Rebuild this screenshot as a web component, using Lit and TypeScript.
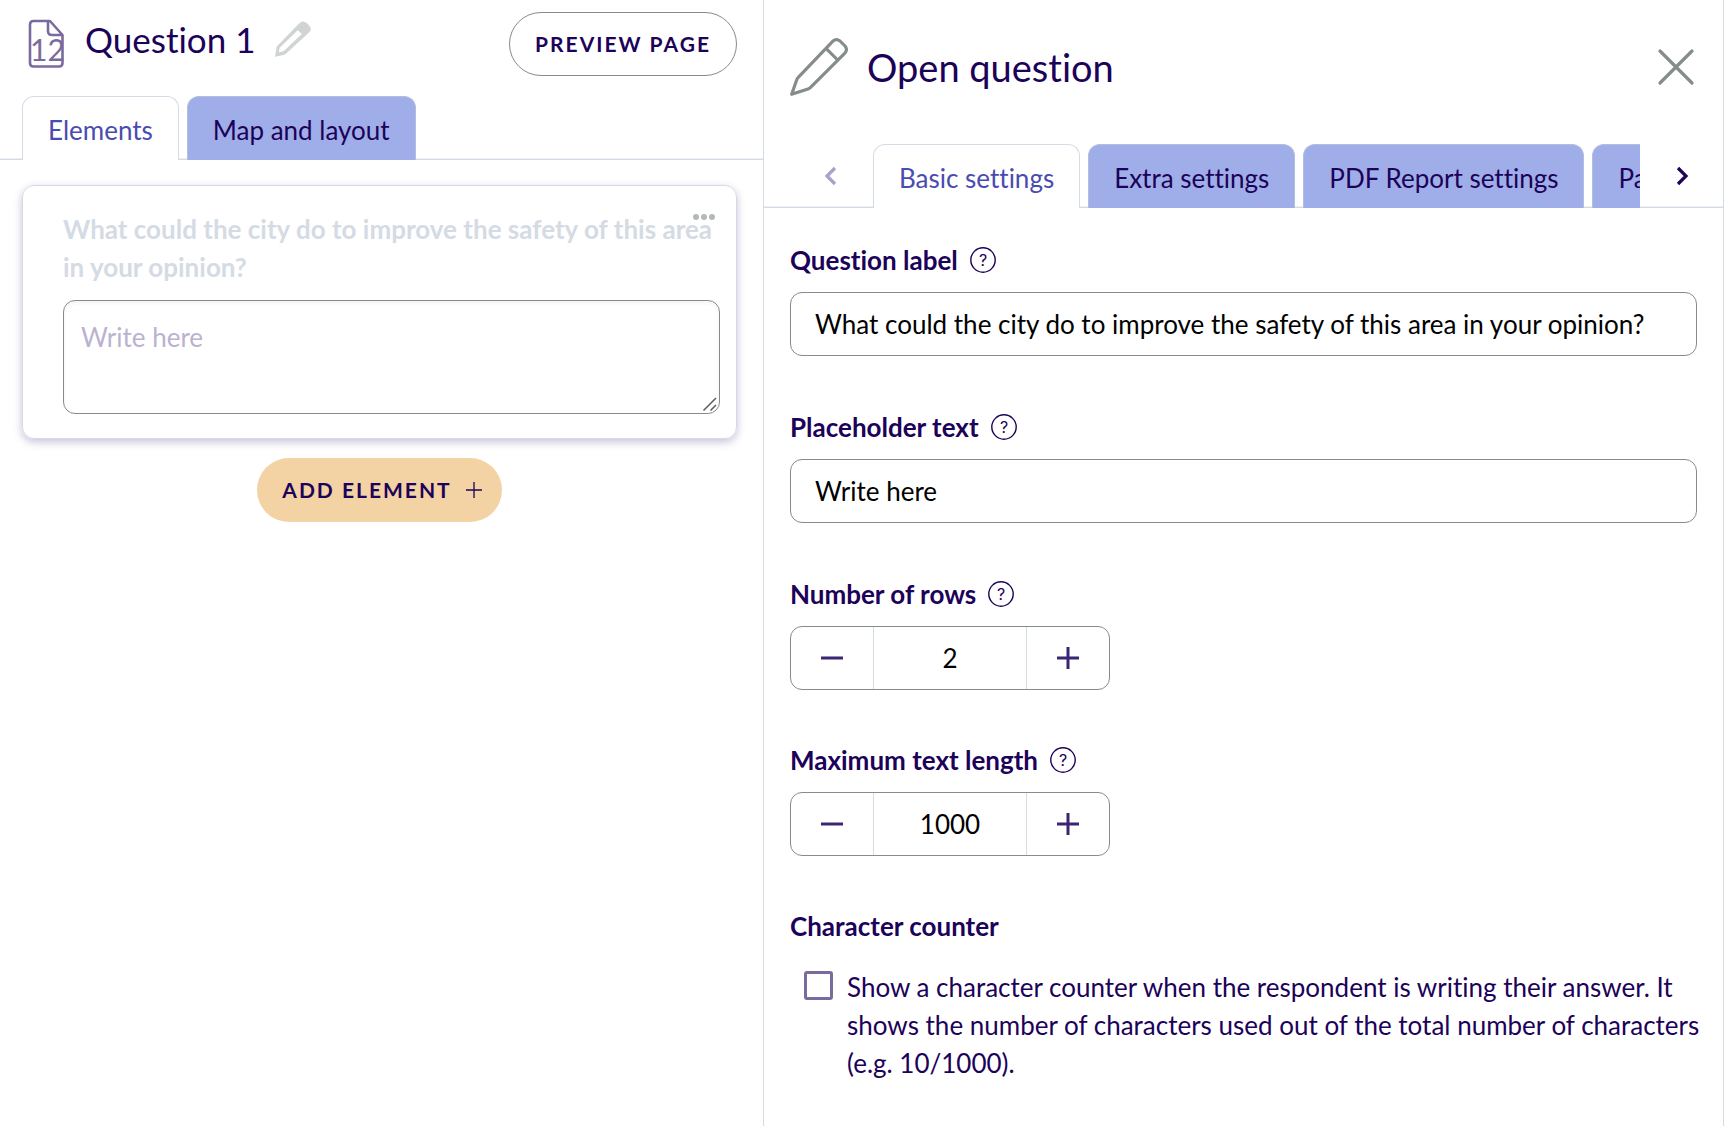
import { LitElement, html, css, svg } from "lit";
import { customElement, state } from "lit/decorators.js";
import { classMap } from "lit/directives/class-map.js";

const pageIcon = html`<svg class="page-icon" width="38" height="50" viewBox="0 0 38 50" aria-hidden="true">
  <path d="M22 2H5.500Q2 2 2 5.500V44Q2 47.500 5.500 47.500H31Q34.500 47.500 34.500 44V16ZM20 2V12Q20 16 24 16H34.500" fill="none" stroke="currentColor" stroke-width="2.600" stroke-linejoin="round" />
  <text x="2" y="42" font-size="30" fill="currentColor">12</text>
</svg>`;

const smallPencil = html`<svg width="36" height="36" viewBox="0 0 106 106" aria-hidden="true">
  <path fill="currentColor" fill-rule="evenodd" d="M0 105L5 75L71 7Q82 -4 93 6L99 12Q111 23 101 33L33 96Q30 99 26 100ZM11 93L26 88L79 38L67 27L14 79Z" />
</svg>`;

const bigPencil = html`<svg class="big-pencil" width="58" height="58" viewBox="0 0 174 174" fill="none" stroke="currentColor" stroke-width="9.500" stroke-linejoin="round" aria-hidden="true">
  <path d="M5 169L20 126Q21 122 24 119L128 10Q139 1 150 9L165 24Q174 35 164 46L61 149Q58 152 54 153ZM108 31L143 66" />
</svg>`;

const closeIcon = html`<svg width="38" height="38" viewBox="0 0 38 38" aria-hidden="true">
  <path d="M3 3L35 35M35 3L3 35" fill="none" stroke="currentColor" stroke-width="3.200" stroke-linecap="round" />
</svg>`;

const chevron = (d: string) => html`<svg width="14" height="20" viewBox="0 0 14 20" aria-hidden="true">
  <path d=${d} fill="none" stroke="currentColor" stroke-width="3.200" />
</svg>`;

const sign = (plus: boolean) => html`<svg width="24" height="24" viewBox="0 0 24 24" aria-hidden="true" stroke="currentColor" stroke-width="3">
  <path d="M1 12H23" />${plus ? svg`<path d="M12 1V23" />` : ""}
</svg>`;

@customElement("help-button")
class HelpButton extends LitElement {
  static styles = css`
    :host { display: flex; }
    .help { display: flex; padding: 0; border: 0; background: none; color: #1c0259; cursor: pointer; }
    .mark { font-family: Inter, sans-serif; }
  `;
  render() {
    return html`<button class="help" type="button" aria-label="Help">
      <svg width="26" height="26" viewBox="0 0 26 26" aria-hidden="true">
        <circle cx="13" cy="13" r="12.200" fill="none" stroke="currentColor" stroke-width="1.400" />
        <text class="mark" x="13" y="18.500" font-size="16" text-anchor="middle" fill="currentColor">?</text>
      </svg>
    </button>`;
  }
}

@customElement("app-root")
class AppRoot extends LitElement {
  @state() private leftTab = 0;
  @state() private rightTab = 0;
  @state() private question = "What could the city do to improve the safety of this area in your opinion?";
  @state() private placeholder = "Write here";
  @state() private rows = 2;
  @state() private maxLength = 1000;

  static styles = css`
    :host {
      display: grid;
      grid-template-columns: minmax(0, 764fr) minmax(0, 960fr);
      min-height: 100vh;
      background: #fff;
      color: #1c0259;
      font: 400 26px/38px Lato, sans-serif;
      font-variant-ligatures: none;
      box-sizing: border-box;
    }
    *, *::before { box-sizing: border-box; }
    button, input, textarea { font: inherit; font-variant-ligatures: none; color: inherit; margin: 0; }
    button { cursor: pointer; padding: 0; border: 0; background: none; }
    h1, h2 { margin: 0; font-weight: 400; }

    .left, .right { border-right: 1px solid #d5dbe4; }
    .left-head { display: flex; align-items: center; padding: 12px 26px 20px 28px; }
    .page-icon { color: #7a6b9f; flex: none; }
    .title { display: flex; align-items: center; gap: 20px; flex: 1; padding: 0 0 10px 19px; }
    .title h1 { font-size: 35px; line-height: 44px; }
    .edit { display: flex; color: #d0d5d3; }
    .pill {
      display: flex; align-items: center; justify-content: center; gap: 16px;
      height: 64px; padding: 0 25px; border-radius: 32px;
      font-size: 21px; font-weight: 700; letter-spacing: 2px; text-transform: uppercase;
    }
    .preview { border: 1px solid #848d8b; }
    .actions { display: flex; justify-content: center; padding: 19px 26px 0 22px; }
    .add { background: #f3d2a3; gap: 14px; padding: 0 20px 0 25px; }

    .tabs {
      display: flex; gap: 8px; height: 64px;
      box-shadow: inset 0 -1px #d5dbe4, inset 0 -2px #eceff3;
    }
    .left .tabs { padding-left: 22px; }
    .tab {
      flex: none; height: 64px; padding: 2px 25px 0;
      border: 1px solid #b3bedd; border-bottom: 0; border-radius: 12px 12px 0 0;
      background: #9faee8; white-space: nowrap;
    }
    .tab.active { background: #fff; color: #4a4bb0; border-color: #d5dbe4; }
    .strip { display: flex; gap: 8px; flex: 1; min-width: 0; overflow: hidden; }
    .right .tabs { gap: 0; }
    .arrow { flex: none; display: flex; align-items: center; justify-content: center; width: 83px; }
    .prev { width: 109px; padding-left: 24px; color: #aaa1c6; }

    .card {
      position: relative; margin: 25px 26px 0 22px; padding: 24px 16px 24px 40px;
      border: 1px solid #d5dbe4; border-radius: 12px;
      box-shadow: 0 3px 8px rgba(60, 30, 120, 0.28);
    }
    .card-label { display: block; color: #d5dbe4; font-weight: 700; padding-bottom: 14px; }
    .menu { position: absolute; top: 21px; right: 18px; display: flex; padding: 6px 2px; color: #b3b9b7; }
    .answer-wrap { position: relative; display: flex; }
    .answer {
      flex: 1; min-width: 0; height: 114px; padding: 17px; resize: none;
      border: 1px solid #848d8b; border-radius: 12px; background: #fff;
      box-shadow: inset 0 2px 4px rgba(0, 0, 0, 0.05);
    }
    .answer::placeholder { color: #bab2d0; opacity: 1; }
    .grip { position: absolute; right: 1px; bottom: 1px; }

    .right-head { display: flex; align-items: center; padding: 38px 28px 48px 26px; }
    .big-pencil { color: #848d8b; flex: none; }
    .right-head h2 { flex: 1; padding-left: 19px; font-size: 38px; line-height: 48px; }
    .close { display: flex; color: #848d8b; }
    .form { padding: 33px 26px 40px; }
    .field { margin-bottom: 52px; }
    .field.number { margin-bottom: 51px; }
    .label { display: flex; align-items: center; gap: 12px; font-weight: 700; margin-bottom: 13px; }
    .text {
      display: block; width: 100%; height: 64px; padding: 0 24px;
      border: 1px solid #848d8b; border-radius: 12px; background: #fff; color: #000;
    }
    .stepper {
      display: grid; grid-template-columns: 82px 154px 82px; width: fit-content; height: 64px;
      border: 1px solid #848d8b; border-radius: 12px; overflow: hidden;
    }
    .step { display: flex; align-items: center; justify-content: center; color: #3b2675; }
    .count {
      min-width: 0; width: 100%; border: 1px solid #d5dbe4; border-width: 0 1px; padding: 0;
      text-align: center; color: #000; background: #fff; appearance: textfield;
    }
    .count::-webkit-inner-spin-button { appearance: none; margin: 0; }
    .counter { min-width: 0; margin: 0 -10px 0 0; padding: 0; border: 0; }
    .legend { padding: 0; font-weight: 700; margin-bottom: 23px; }
    .check { display: flex; align-items: flex-start; gap: 14px; padding-left: 14px; }
    .box {
      flex: none; width: 29px; height: 29px; margin: 3px 0 0; appearance: none;
      border: 3px solid #7a6b9f; border-radius: 3px; background: #fff;
    }
    .box:checked { background: #7a6b9f; box-shadow: inset 0 0 0 3px #fff; }
  `;

  private tab(text: string, index: number, current: number, pick: (i: number) => void) {
    return html`<button class=${classMap({ tab: true, active: index === current })} role="tab"
      aria-selected=${index === current ? "true" : "false"} @click=${() => pick(index)}>${text}</button>`;
  }

  private number(id: string, label: string, value: number, set: (n: number) => void) {
    return html`<div class="field number">
      <div class="label"><label for=${id}>${label}</label><help-button></help-button></div>
      <div class="stepper">
        <button class="step" type="button" aria-label="Decrease" @click=${() => set(Math.max(1, value - 1))}>${sign(false)}</button>
        <input class="count" id=${id} type="number" .value=${String(value)}
          @change=${(e: Event) => set(Number((e.target as HTMLInputElement).value))} />
        <button class="step" type="button" aria-label="Increase" @click=${() => set(value + 1)}>${sign(true)}</button>
      </div>
    </div>`;
  }

  private textField(id: string, label: string, value: string, set: (s: string) => void) {
    return html`<div class="field">
      <div class="label"><label for=${id}>${label}</label><help-button></help-button></div>
      <input class="text" id=${id} type="text" .value=${value}
        @input=${(e: Event) => set((e.target as HTMLInputElement).value)} />
    </div>`;
  }

  render() {
    return html`
      <main class="left">
        <header class="left-head">
          ${pageIcon}
          <div class="title">
            <h1>Question 1</h1>
            <button class="edit" type="button" aria-label="Rename">${smallPencil}</button>
          </div>
          <button class="pill preview" type="button">Preview page</button>
        </header>
        <div class="tabs" role="tablist">
          ${["Elements", "Map and layout"].map((t, i) => this.tab(t, i, this.leftTab, (n) => (this.leftTab = n)))}
        </div>
        <section class="card">
          <label class="card-label" for="answer">${this.question}</label>
          <div class="answer-wrap">
            <textarea class="answer" id="answer" rows=${this.rows} placeholder=${this.placeholder}></textarea>
            <svg class="grip" width="18" height="18" viewBox="0 0 18 18" aria-hidden="true">
              <path d="M2.500 15.500L15 3M9.500 15.500L15 10" fill="none" stroke="#5c5c5c" stroke-width="1.500" />
            </svg>
          </div>
          <button class="menu" type="button" aria-label="Element menu">
            <svg width="24" height="8" viewBox="0 0 24 8" fill="currentColor" aria-hidden="true">
              <circle cx="4" cy="4" r="3" /><circle cx="12" cy="4" r="3" /><circle cx="20" cy="4" r="3" />
            </svg>
          </button>
        </section>
        <div class="actions">
          <button class="pill add" type="button">Add element
            <svg width="16" height="16" viewBox="0 0 16 16" aria-hidden="true">
              <path d="M0 8H16M8 0V16" stroke="currentColor" stroke-width="1.300" />
            </svg>
          </button>
        </div>
      </main>
      <aside class="right">
        <header class="right-head">
          ${bigPencil}
          <h2>Open question</h2>
          <button class="close" type="button" aria-label="Close">${closeIcon}</button>
        </header>
        <div class="tabs">
          <button class="arrow prev" type="button" aria-label="Previous tabs">${chevron("M11 2L3 10L11 18")}</button>
          <div class="strip" role="tablist">
            ${["Basic settings", "Extra settings", "PDF Report settings", "Parameters"].map((t, i) =>
              this.tab(t, i, this.rightTab, (n) => (this.rightTab = n)))}
          </div>
          <button class="arrow" type="button" aria-label="Next tabs">${chevron("M3 2L11 10L3 18")}</button>
        </div>
        <form class="form" @submit=${(e: Event) => e.preventDefault()}>
          ${this.textField("question-label", "Question label", this.question, (s) => (this.question = s))}
          ${this.textField("placeholder-text", "Placeholder text", this.placeholder, (s) => (this.placeholder = s))}
          ${this.number("row-count", "Number of rows", this.rows, (n) => (this.rows = n))}
          ${this.number("max-length", "Maximum text length", this.maxLength, (n) => (this.maxLength = n))}
          <fieldset class="counter">
            <legend class="legend">Character counter</legend>
            <div class="check">
              <input class="box" id="show-counter" type="checkbox" />
              <label for="show-counter">Show a character counter when the respondent is writing their answer. It shows the number of characters used out of the total number of characters (e.g. 10/1000).</label>
            </div>
          </fieldset>
        </form>
      </aside>
    `;
  }
}
